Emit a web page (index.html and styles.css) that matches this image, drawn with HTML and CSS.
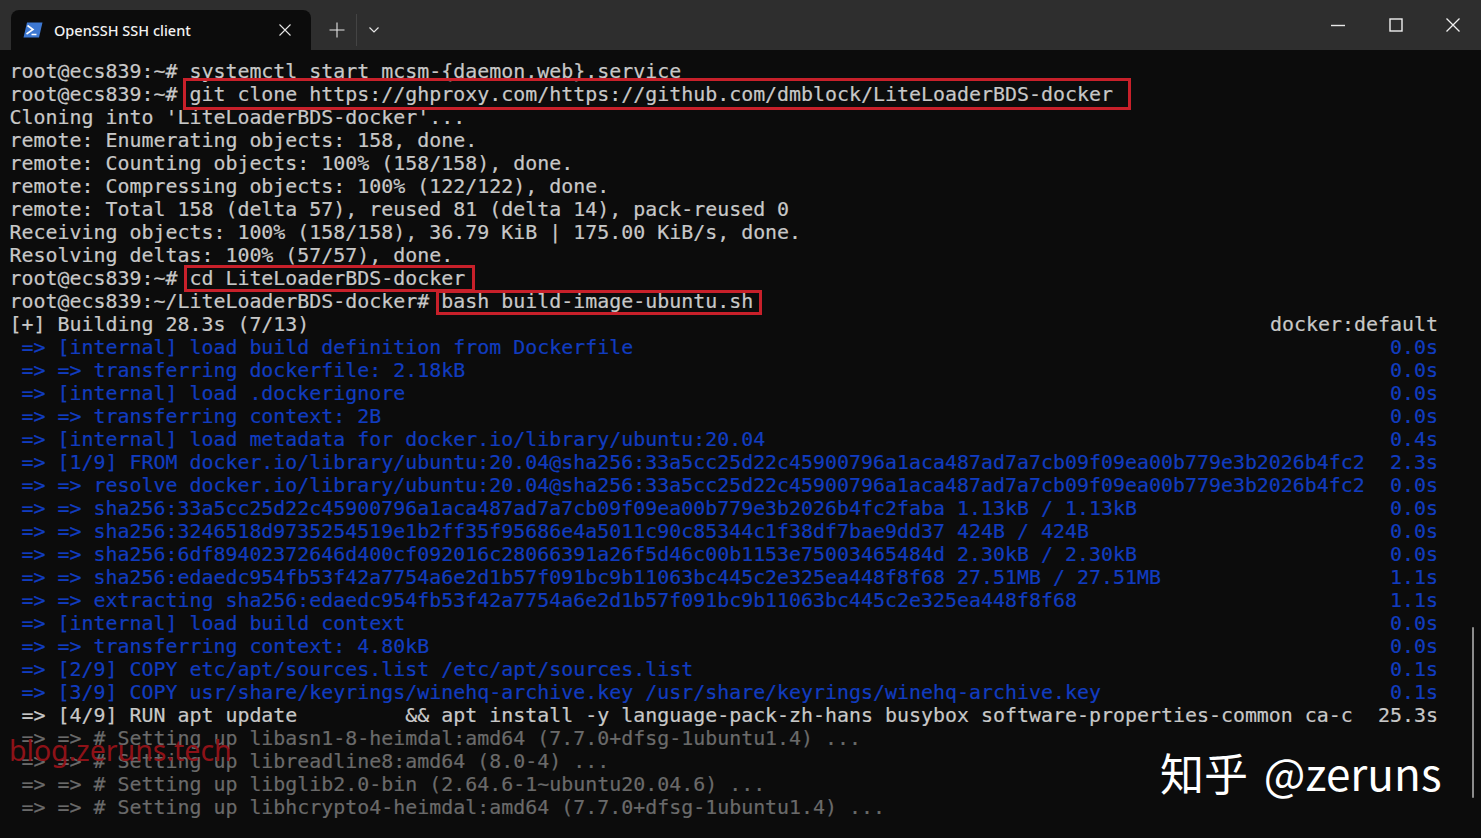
FILE: index.html
```html
<!DOCTYPE html>
<html lang="en">
<head>
<meta charset="utf-8">
<title>OpenSSH SSH client</title>
<link rel="stylesheet" href="styles.css">
</head>
<body>
<div class="window">
  <header class="titlebar">
    <div class="tab">
      <svg class="tab-icon" viewBox="0 0 20 16" width="20" height="16"><path d="M4 0.5H19.5L16 15.5H0.5Z" fill="#3d78d2"/><path d="M4.5 3.5L10 7.5L3.5 12" fill="none" stroke="#fff" stroke-width="1.6"/><path d="M8.5 12.5H13.5" stroke="#fff" stroke-width="1.5"/></svg>
      <span class="tab-title">OpenSSH SSH client</span>
      <svg class="tab-close" viewBox="0 0 12 12" width="12" height="12"><path d="M0.5 0.5L11.5 11.5M11.5 0.5L0.5 11.5" stroke="#e6e6e6" stroke-width="1.1" fill="none"/></svg>
    </div>
    <div class="tab-actions">
      <svg class="new-tab" viewBox="0 0 16 16" width="16" height="16"><path d="M8 0.5V15.5M0.5 8H15.5" stroke="#e6e6e6" stroke-width="1.1" fill="none"/></svg>
      <span class="divider"></span>
      <svg class="chevron" viewBox="0 0 10 6" width="10" height="6"><path d="M0.5 0.5L5 5L9.5 0.5" stroke="#e6e6e6" stroke-width="1.2" fill="none"/></svg>
    </div>
    <div class="controls">
      <svg viewBox="0 0 14 14" width="14" height="14"><path d="M0 7.5H14" stroke="#e8e8e8" stroke-width="1.4"/></svg>
      <svg viewBox="0 0 14 14" width="14" height="14"><rect x="1" y="1" width="12" height="12" fill="none" stroke="#f0f0f0" stroke-width="1.4"/></svg>
      <svg viewBox="0 0 14 14" width="14" height="14"><path d="M0.5 0.5L13.5 13.5M13.5 0.5L0.5 13.5" stroke="#f0f0f0" stroke-width="1.3" fill="none"/></svg>
    </div>
  </header>
  <main class="terminal">
    <div class="line">root@ecs839:~# systemctl start mcsm-{daemon,web}.service</div>
    <div class="line">root@ecs839:~# git clone https://ghproxy.com/https://github.com/dmblock/LiteLoaderBDS-docker</div>
    <div class="line">Cloning into 'LiteLoaderBDS-docker'...</div>
    <div class="line">remote: Enumerating objects: 158, done.</div>
    <div class="line">remote: Counting objects: 100% (158/158), done.</div>
    <div class="line">remote: Compressing objects: 100% (122/122), done.</div>
    <div class="line">remote: Total 158 (delta 57), reused 81 (delta 14), pack-reused 0</div>
    <div class="line">Receiving objects: 100% (158/158), 36.79 KiB | 175.00 KiB/s, done.</div>
    <div class="line">Resolving deltas: 100% (57/57), done.</div>
    <div class="line">root@ecs839:~# cd LiteLoaderBDS-docker</div>
    <div class="line">root@ecs839:~/LiteLoaderBDS-docker# bash build-image-ubuntu.sh</div>
    <div class="line row"><span>[+] Building 28.3s (7/13)</span><span>docker:default</span></div>
    <div class="line row blue"><span> =&gt; [internal] load build definition from Dockerfile</span><span>0.0s</span></div>
    <div class="line row blue"><span> =&gt; =&gt; transferring dockerfile: 2.18kB</span><span>0.0s</span></div>
    <div class="line row blue"><span> =&gt; [internal] load .dockerignore</span><span>0.0s</span></div>
    <div class="line row blue"><span> =&gt; =&gt; transferring context: 2B</span><span>0.0s</span></div>
    <div class="line row blue"><span> =&gt; [internal] load metadata for docker.io/library/ubuntu:20.04</span><span>0.4s</span></div>
    <div class="line row blue"><span> =&gt; [1/9] FROM docker.io/library/ubuntu:20.04@sha256:33a5cc25d22c45900796a1aca487ad7a7cb09f09ea00b779e3b2026b4fc2</span><span>2.3s</span></div>
    <div class="line row blue"><span> =&gt; =&gt; resolve docker.io/library/ubuntu:20.04@sha256:33a5cc25d22c45900796a1aca487ad7a7cb09f09ea00b779e3b2026b4fc2</span><span>0.0s</span></div>
    <div class="line row blue"><span> =&gt; =&gt; sha256:33a5cc25d22c45900796a1aca487ad7a7cb09f09ea00b779e3b2026b4fc2faba 1.13kB / 1.13kB</span><span>0.0s</span></div>
    <div class="line row blue"><span> =&gt; =&gt; sha256:3246518d9735254519e1b2ff35f95686e4a5011c90c85344c1f38df7bae9dd37 424B / 424B</span><span>0.0s</span></div>
    <div class="line row blue"><span> =&gt; =&gt; sha256:6df89402372646d400cf092016c28066391a26f5d46c00b1153e75003465484d 2.30kB / 2.30kB</span><span>0.0s</span></div>
    <div class="line row blue"><span> =&gt; =&gt; sha256:edaedc954fb53f42a7754a6e2d1b57f091bc9b11063bc445c2e325ea448f8f68 27.51MB / 27.51MB</span><span>1.1s</span></div>
    <div class="line row blue"><span> =&gt; =&gt; extracting sha256:edaedc954fb53f42a7754a6e2d1b57f091bc9b11063bc445c2e325ea448f8f68</span><span>1.1s</span></div>
    <div class="line row blue"><span> =&gt; [internal] load build context</span><span>0.0s</span></div>
    <div class="line row blue"><span> =&gt; =&gt; transferring context: 4.80kB</span><span>0.0s</span></div>
    <div class="line row blue"><span> =&gt; [2/9] COPY etc/apt/sources.list /etc/apt/sources.list</span><span>0.1s</span></div>
    <div class="line row blue"><span> =&gt; [3/9] COPY usr/share/keyrings/winehq-archive.key /usr/share/keyrings/winehq-archive.key</span><span>0.1s</span></div>
    <div class="line row"><span> =&gt; [4/9] RUN apt update         &amp;&amp; apt install -y language-pack-zh-hans busybox software-properties-common ca-c</span><span>25.3s</span></div>
    <div class="line dim"> =&gt; =&gt; # Setting up libasn1-8-heimdal:amd64 (7.7.0+dfsg-1ubuntu1.4) ...</div>
    <div class="line dim"> =&gt; =&gt; # Setting up libreadline8:amd64 (8.0-4) ...</div>
    <div class="line dim"> =&gt; =&gt; # Setting up libglib2.0-bin (2.64.6-1~ubuntu20.04.6) ...</div>
    <div class="line dim"> =&gt; =&gt; # Setting up libhcrypto4-heimdal:amd64 (7.7.0+dfsg-1ubuntu1.4) ...</div>
    <div class="mark mark-one"></div>
    <div class="mark mark-two"></div>
    <div class="mark mark-three"></div>
    <div class="wm-red">blog.zeruns.tech</div>
    <div class="wm-zhihu">知乎 @zeruns</div>
    <div class="scrollbar"></div>
  </main>
</div>
</body>
</html>
```

FILE: styles.css
```css
html, body {
  margin: 0;
  padding: 0;
  height: 100%;
  background: #0c0c0c;
  overflow: hidden;
}
.window {
  display: flex;
  flex-direction: column;
  height: 838px;
}
.titlebar {
  display: flex;
  align-items: flex-end;
  height: 50px;
  flex: none;
  background: #2e2e2e;
  padding-left: 11px;
  box-sizing: border-box;
}
.tab {
  display: flex;
  align-items: center;
  width: 300px;
  height: 40px;
  box-sizing: border-box;
  background: #0c0c0c;
  border-radius: 8px 8px 0 0;
  padding: 0 20px 0 12px;
  color: #f2f2f2;
  font: 500 14.5px "Noto Sans", sans-serif;
}
.tab-title { flex: 1; margin-left: 11px; }
.tab-actions {
  display: flex;
  align-items: center;
  height: 40px;
  margin-left: 18px;
}
.divider {
  width: 1px;
  height: 32px;
  background: #444;
  margin: 0 12px 0 11px;
}
.controls {
  display: flex;
  align-items: center;
  gap: 43.5px;
  margin-left: auto;
  height: 50px;
  padding-right: 21px;
  align-self: flex-start;
}
.terminal {
  position: relative;
  flex: 1;
  padding: 10px 43px 0 9.5px;
  background: #0c0c0c;
  color: #c8c8c8;
  font-family: "DejaVu Sans Mono", monospace;
  font-size: 19.93px;
  overflow: hidden;
  -webkit-text-stroke: 0.2px currentColor;
}
.line {
  height: 23px;
  line-height: 23px;
  white-space: pre;
}
.row { display: flex; justify-content: space-between; }
.blue { color: #113cc0; }
.dim { color: #6a6a6a; }
.mark {
  position: absolute;
  border: 3px solid #c8202a;
  box-sizing: border-box;
}
.mark-one { left: 183px; top: 28px; width: 948px; height: 32px; }
.mark-two { left: 184px; top: 215px; width: 291px; height: 27px; }
.mark-three { left: 436px; top: 240px; width: 326px; height: 25px; }
.wm-red {
  position: absolute;
  left: 9px;
  top: 682px;
  color: #8e1218;
  font: 28.5px/36px "Noto Sans", sans-serif;
  -webkit-text-stroke: 0;
}
.wm-zhihu {
  position: absolute;
  left: 1160px;
  top: 695px;
  color: #fff;
  font: 44px/54px "Noto Sans CJK SC", sans-serif;
  word-spacing: 6px;
  -webkit-text-stroke: 0;
}
.scrollbar {
  position: absolute;
  left: 1472px;
  top: 577px;
  width: 2px;
  height: 171px;
  background: #8c8c8c;
  border-radius: 1px;
}
```
